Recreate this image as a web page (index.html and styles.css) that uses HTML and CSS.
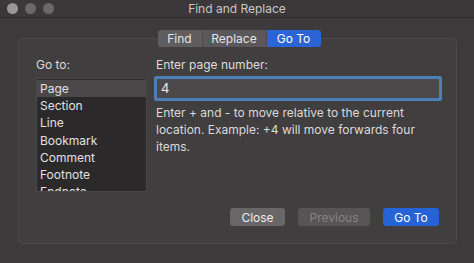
FILE: index.html
```html
<!DOCTYPE html>
<html lang="en">
<head>
<title>Find and Replace</title>
<link rel="stylesheet" href="styles.css">
</head>
<body>
<div class="titlebar">
    <div class="lights">
        <span class="light"></span>
        <span class="light"></span>
        <span class="light"></span>
    </div>
    <div class="title">Find and Replace</div>
</div>

<div class="content">
    <div class="tabs">
        <span class="tab tab-find">Find</span>
        <span class="tab tab-replace">Replace</span>
        <span class="tab tab-goto active">Go To</span>
    </div>

    <div class="group">
        <div class="columns">
            <div class="left">
                <div class="label">Go to:</div>
                <ul class="list">
                    <li class="selected">Page</li>
                    <li>Section</li>
                    <li>Line</li>
                    <li>Bookmark</li>
                    <li>Comment</li>
                    <li>Footnote</li>
                    <li>Endnote</li>
                </ul>
            </div>
            <div class="right">
                <div class="label">Enter page number:</div>
                <div class="field">4</div>
                <p class="help">Enter + and - to move relative to the current location. Example: +4 will move forwards four items.</p>
            </div>
        </div>
        <div class="buttons">
            <button class="btn btn-close">Close</button>
            <button class="btn btn-prev" disabled>Previous</button>
            <button class="btn btn-go">Go To</button>
        </div>
    </div>
</div>
</body>
</html>
```

FILE: styles.css
```css
html, body { margin: 0; padding: 0; }
body { width: 474px; height: 263px; overflow: hidden; background: #3c3a3a; font-family: Inter, "Liberation Sans", sans-serif; font-size: 12px; color: #dedcdc; }

/* title bar */
.titlebar { height: 17px; display: flex; align-items: center; border-bottom: 1px solid #2c2a2a; background: #3a3838; }
.lights { display: flex; gap: 7px; padding-left: 7px; }
.light { width: 11px; height: 11px; border-radius: 50%; background: #6a6868; }
.light:first-child { background: #9a9696; }
.title { flex: 1; text-align: center; margin-right: 54px; color: #c9c7c7; font-size: 12px; }

.content { padding: 12px 17px 0 18px; }

/* segmented control */
.tabs { display: flex; justify-content: center; position: relative; z-index: 1; height: 17px; margin-left: 3px; }
.tab { display: flex; align-items: center; justify-content: center; height: 17px; background: #5f5d5d; color: #e6e4e4; border-right: 1px solid #4c4a4a; }
.tab-find { width: 44px; border-radius: 3px 0 0 3px; }
.tab-replace { width: 63px; background: #5a5858; }
.tab-goto { width: 54px; border-right: 0; border-radius: 0 3px 3px 0; }
.tab.active { background: #2a64d5; color: #fff; }

/* group box */
.group { margin-top: -9px; height: 206px; box-sizing: border-box; border: 1px solid #4b4949; border-radius: 4px; background: #403e3e; padding: 0 17px; display: flex; flex-direction: column; }
.columns { display: flex; gap: 7px; padding-top: 18px; }
.label { line-height: 16px; height: 16px; }
.left { flex: none; width: 111px; }
.right { flex: 1; }
.right .label { padding-left: 2px; }

.list { list-style: none; margin: 5px 0 0; padding: 1px 0 0; height: 114px; overflow: hidden; background: #2b2929; border: 1px solid #4a4848; box-sizing: border-box; }
.list li { height: 17.2px; line-height: 17.2px; padding-left: 3px; color: #e2e0e0; }
.list li.selected { background: #4a4848; }

.field { margin-top: 3px; height: 25px; box-sizing: border-box; border: 3px solid #4a7fb8; border-radius: 2px; background: #4b4949; color: #efeded; padding-left: 4px; line-height: 19px; font-size: 13px; width: 288px; }
.help { margin: 3px 0 0 2px; line-height: 17px; color: #dcdada; width: 280px; }

/* buttons */
.buttons { margin-top: auto; margin-bottom: 17px; display: flex; justify-content: flex-end; gap: 13px; }
.btn { font-family: inherit; font-size: 12px; height: 18px; border: 0; border-radius: 3px; padding: 0; color: #eeecec; background: #686666; }
.btn-close { width: 55px; }
.btn-prev { width: 72px; background: #565454; color: #858383; }
.btn-go { width: 56px; background: #2563d6; color: #fff; }
```
